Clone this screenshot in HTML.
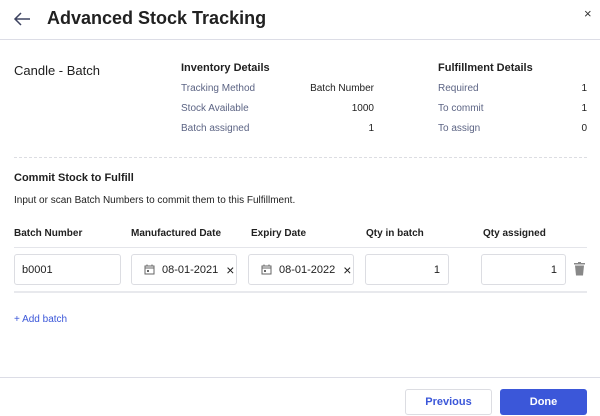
<!DOCTYPE html>
<html><head><style>
*{box-sizing:border-box;margin:0;padding:0}
body{width:600px;height:416px;background:#fff;font-family:"Liberation Sans",sans-serif;color:#212121;position:relative;overflow:hidden}
.a{position:absolute;white-space:nowrap}
.lbl{font-size:10px;color:#5c6484}
.val{font-size:10px;color:#212121;text-align:right}
.h{font-size:11px;font-weight:bold}
.inp{position:absolute;top:254px;height:31px;border:1px solid #dcdde2;border-radius:3px;font-size:11px;display:flex;align-items:center}
.btn{position:absolute;top:389px;height:26px;border-radius:3px;font-size:11px;font-weight:bold;display:flex;align-items:center;justify-content:center}
</style></head><body>
<svg class="a" style="left:13px;top:11px" width="18" height="16" viewBox="0 0 18 16"><path d="M17 8H2M8 2L2 8l6 6" stroke="#3d4360" stroke-width="1.5" fill="none"/></svg>
<div class="a" style="left:47px;top:8px;font-size:18px;font-weight:bold">Advanced Stock Tracking</div>
<div class="a" style="left:584px;top:6px;font-size:13px;color:#333">×</div>
<div class="a" style="left:0;top:39px;width:600px;height:1px;background:#dcdde6"></div>

<div class="a" style="left:14px;top:63px;font-size:13px">Candle - Batch</div>
<div class="a h" style="left:181px;top:62px">Inventory Details</div>
<div class="a lbl" style="left:181px;top:83px">Tracking Method</div>
<div class="a lbl" style="left:181px;top:103px">Stock Available</div>
<div class="a lbl" style="left:181px;top:123px">Batch assigned</div>
<div class="a val" style="right:226px;top:83px">Batch Number</div>
<div class="a val" style="right:226px;top:103px">1000</div>
<div class="a val" style="right:226px;top:123px">1</div>
<div class="a h" style="left:438px;top:62px">Fulfillment Details</div>
<div class="a lbl" style="left:438px;top:83px">Required</div>
<div class="a lbl" style="left:438px;top:103px">To commit</div>
<div class="a lbl" style="left:438px;top:123px">To assign</div>
<div class="a val" style="right:13px;top:83px">1</div>
<div class="a val" style="right:13px;top:103px">1</div>
<div class="a val" style="right:13px;top:123px">0</div>
<div class="a" style="left:14px;top:157px;width:573px;border-top:1px dashed #dcdde2"></div>

<div class="a" style="left:14px;top:172px;font-size:11px;font-weight:bold">Commit Stock to Fulfill</div>
<div class="a" style="left:14px;top:195px;font-size:10px">Input or scan Batch Numbers to commit them to this Fulfillment.</div>

<div class="a h" style="left:14px;top:228px;font-size:10px">Batch Number</div>
<div class="a h" style="left:131px;top:228px;font-size:10px">Manufactured Date</div>
<div class="a h" style="left:251px;top:228px;font-size:10px">Expiry Date</div>
<div class="a h" style="left:366px;top:228px;font-size:10px">Qty in batch</div>
<div class="a h" style="left:483px;top:228px;font-size:10px">Qty assigned</div>
<div class="a" style="left:14px;top:247px;width:573px;height:1px;background:#e4e5ea"></div>

<div class="inp" style="left:14px;width:107px;padding-left:7px">b0001</div>
<div class="inp" style="left:131px;width:106px;padding-left:12px">
<svg width="11" height="11" viewBox="0 0 11 11"><rect x="1" y="2" width="9" height="8" fill="none" stroke="#666" stroke-width="1"/><path d="M3 0.5v2M8 0.5v2M1 4h9" stroke="#666"/><rect x="3" y="6" width="2" height="2" fill="#666"/></svg>
<span style="margin-left:7px">08-01-2021</span><span style="margin-left:8px;font-size:14px">×</span></div>
<div class="inp" style="left:248px;width:106px;padding-left:12px">
<svg width="11" height="11" viewBox="0 0 11 11"><rect x="1" y="2" width="9" height="8" fill="none" stroke="#666" stroke-width="1"/><path d="M3 0.5v2M8 0.5v2M1 4h9" stroke="#666"/><rect x="3" y="6" width="2" height="2" fill="#666"/></svg>
<span style="margin-left:7px">08-01-2022</span><span style="margin-left:8px;font-size:14px">×</span></div>
<div class="inp" style="left:365px;width:84px;justify-content:flex-end;padding-right:8px">1</div>
<div class="inp" style="left:481px;width:85px;justify-content:flex-end;padding-right:8px">1</div>
<svg class="a" style="left:574px;top:262px" width="11" height="14" viewBox="0 0 11 14"><rect x="0" y="1" width="11" height="1.5" fill="#888"/><rect x="4" y="0" width="3" height="1.5" fill="#888"/><path d="M1 3.5h9l-1 10H2z" fill="#888"/></svg>
<div class="a" style="left:14px;top:291px;width:573px;height:2px;background:#e8e9ed"></div>

<div class="a" style="left:14px;top:314px;font-size:10px;color:#3b57d9">+ Add batch</div>

<div class="a" style="left:0;top:377px;width:600px;height:1px;background:#dcdde6"></div>
<div class="btn" style="left:405px;width:87px;border:1px solid #dcdde2;color:#3b57d9">Previous</div>
<div class="btn" style="left:500px;width:87px;background:#3b57d9;color:#fff">Done</div>
</body></html>
